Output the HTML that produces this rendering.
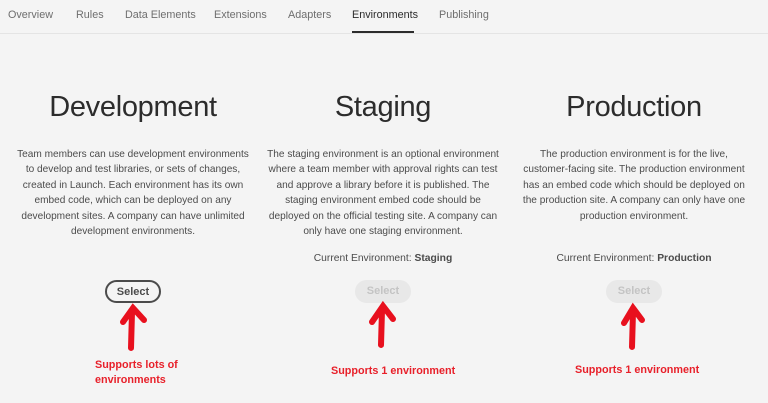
<!DOCTYPE html>
<html><head><style>
body{margin:0;width:768px;height:403px;background:#f4f4f4;font-family:"Liberation Sans",sans-serif;position:relative;overflow:hidden;color:#4b4b4b}
.nav{position:absolute;top:0;left:0;width:768px;height:33px;border-bottom:1px solid #e4e4e4}
.nav span{position:absolute;top:9px;font-size:10.8px;color:#6e6e6e;white-space:nowrap}
.nav .act{color:#2c2c2c}
.ul{position:absolute;left:352px;top:31px;width:62px;height:2px;background:#2c2c2c}
.col{position:absolute;width:260px;text-align:center}
h1{margin:0;position:absolute;top:91px;width:100%;font-weight:300;font-size:29px;color:#2c2c2c;letter-spacing:-0.3px}
p{margin:0;position:absolute;top:147px;width:100%;font-size:10.1px;line-height:15.45px;color:#4b4b4b;white-space:nowrap}
.cur{position:absolute;top:253px;width:100%;font-size:10.3px;color:#4b4b4b}
.btn{position:absolute;top:280px;left:50%;margin-left:-28px;width:56px;height:23px;border-radius:12px;box-sizing:border-box;font-size:11px;font-weight:bold;line-height:21px}
.b1{border:2px solid #4b4b4b;color:#4b4b4b}
.b2{background:#e8e8e8;color:#c4c4c4;border:1px solid #e8e8e8}
.red{position:absolute;font-size:10.8px;font-weight:bold;color:#e8202a;white-space:nowrap;line-height:15px}
svg{position:absolute}
</style></head><body>
<div class="nav">
<span style="left:8px">Overview</span><span style="left:76px">Rules</span><span style="left:125px">Data Elements</span><span style="left:214px">Extensions</span><span style="left:288px">Adapters</span><span class="act" style="left:352px">Environments</span><span style="left:439px">Publishing</span>
</div>
<div class="ul"></div>

<div class="col" style="left:3px">
<h1>Development</h1>
<p>Team members can use development environments<br>to develop and test libraries, or sets of changes,<br>created in Launch. Each environment has its own<br>embed code, which can be deployed on any<br>development sites. A company can have unlimited<br>development environments.</p>
<div class="btn b1">Select</div>
</div>
<div class="col" style="left:253px">
<h1>Staging</h1>
<p>The staging environment is an optional environment<br>where a team member with approval rights can test<br>and approve a library before it is published. The<br>staging environment embed code should be<br>deployed on the official testing site. A company can<br>only have one staging environment.</p>
<div class="cur">Current Environment: <b>Staging</b></div>
<div class="btn b2">Select</div>
</div>
<div class="col" style="left:504px">
<h1>Production</h1>
<p>The production environment is for the live,<br>customer-facing site. The production environment<br>has an embed code which should be deployed on<br>the production site. A company can only have one<br>production environment.</p>
<div class="cur">Current Environment: <b>Production</b></div>
<div class="btn b2">Select</div>
</div>

<svg width="768" height="403" style="left:0;top:0">
<g stroke="#e8101e" stroke-width="6" stroke-linecap="round" fill="none">
<path d="M131 348 L132 312 M123 322 L133 308 L144 320"/>
<path d="M381 345 L382 310 M372 322 L383 306 L393 319"/>
<path d="M632 347 L633 312 M624 323 L633 308 L642 320"/>
</g>
</svg>
<div class="red" style="left:95px;top:358px">Supports lots of<br>environments</div>
<div class="red" style="left:331px;top:364px">Supports 1 environment</div>
<div class="red" style="left:575px;top:363px">Supports 1 environment</div>
</body></html>
